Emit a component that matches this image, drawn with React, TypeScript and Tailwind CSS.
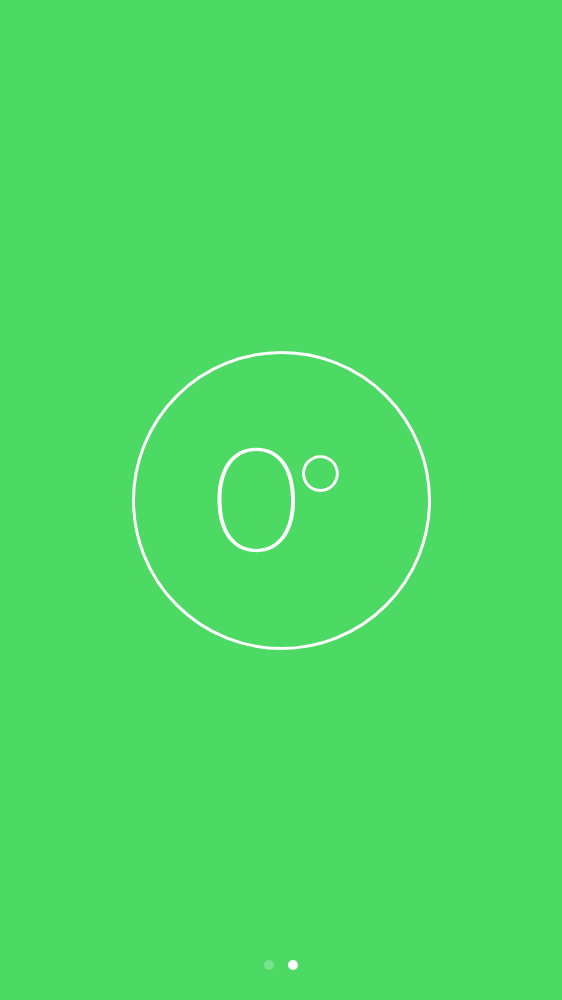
import React from 'react';

// --- NÍVEL (bolha) ---
const Level: React.FC<{ degrees: number }> = ({ degrees }) => (
    <div className="w-[299px] h-[299px] rounded-full border-[3px] border-white flex items-center justify-center">
        <div className="flex items-start text-white font-thin leading-none ml-[2px]" style={{ fontFamily: 'Inter, "Noto Sans", sans-serif' }}>
            <span className="text-[140px] leading-none scale-x-[1.24]">{degrees}</span>
            <span className="text-[124px] leading-none mt-[10px] -ml-[6px]">°</span>
        </div>
    </div>
);

const PageDots: React.FC<{ count: number; active: number }> = ({ count, active }) => (
    <div className="absolute bottom-[30px] left-0 right-0 flex justify-center gap-[14px]">
        {Array.from({ length: count }).map((_, i) => (
            <span
                key={i}
                className={i === active ? 'w-[10px] h-[10px] rounded-full bg-white' : 'w-[10px] h-[10px] rounded-full bg-white/25'}
            />
        ))}
    </div>
);

export default function App() {
    return (
        <div className="relative w-full h-[1000px] bg-[#4cd964] flex items-center justify-center overflow-hidden">
            <Level degrees={0} />
            <PageDots count={2} active={1} />
        </div>
    );
}
